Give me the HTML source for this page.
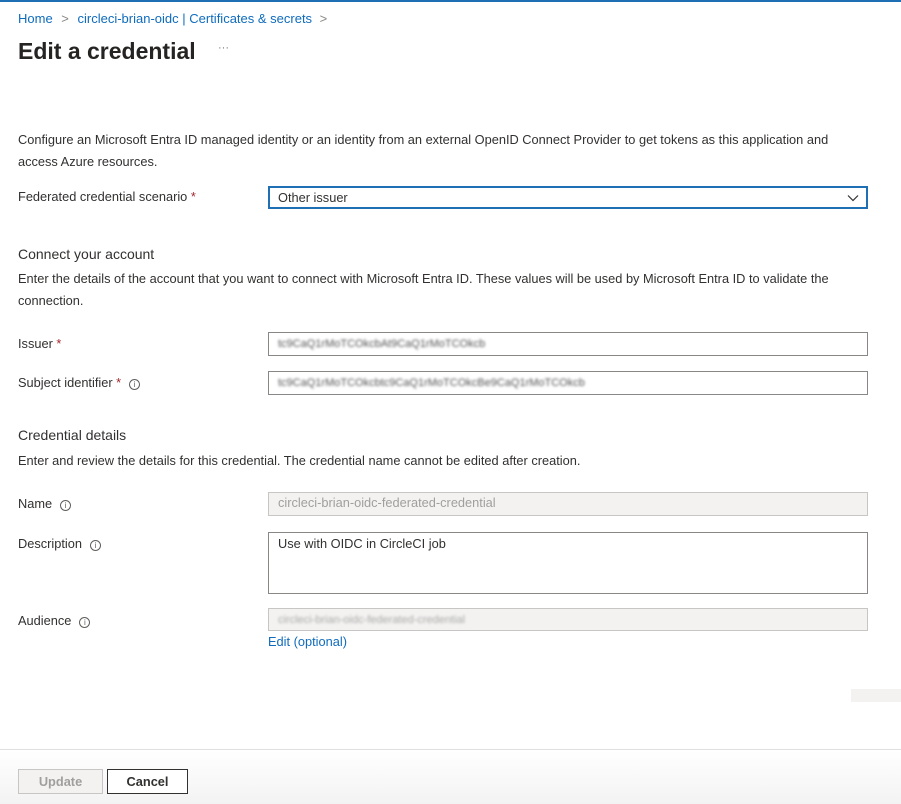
<!DOCTYPE html>
<html><head><meta charset="utf-8"><style>
*{box-sizing:border-box;margin:0;padding:0}
body{width:901px;height:804px;background:#fff;font-family:"Liberation Sans",Arial,sans-serif;font-size:12.8px;color:#323130;position:relative;overflow:hidden}
.a{position:absolute;white-space:nowrap}
.link{color:#0f6cbd}
.inp{position:absolute;left:268px;width:600px;border:1px solid #8a8886;background:#fff;padding-left:9px;line-height:20px}
.dis{background:#f3f2f1;border-color:#c8c6c4;color:#a19f9d}
.req{color:#a4262c}
.i{display:inline-block;width:11px;height:11px;border:1px solid #605e5c;border-radius:50%;font-size:8px;line-height:9px;text-align:center;margin-left:8px;vertical-align:0px;color:#605e5c}
.blur{filter:blur(1.3px);color:#555;font-size:11px}
</style></head><body>
<div class="a" style="left:0;top:0;width:901px;height:2px;background:#1f6fb5"></div>
<div class="a link" style="left:18px;top:11px;font-size:13px">Home <span style="color:#8a8886;margin:0 5px">&gt;</span> circleci-brian-oidc | Certificates &amp; secrets <span style="color:#8a8886;margin-left:4px">&gt;</span></div>
<div class="a" style="left:18px;top:38px;font-size:23px;font-weight:bold;color:#252423">Edit a credential</div>
<div class="a" style="left:218px;top:42px;font-size:11px;color:#777">···</div>
<div class="a" style="left:18px;top:129px;line-height:22px">Configure an Microsoft Entra ID managed identity or an identity from an external OpenID Connect Provider to get tokens as this application and<br>access Azure resources.</div>
<div class="a" style="left:18px;top:189px">Federated credential scenario <span class="req">*</span></div>
<div class="inp" style="top:186px;height:23px;border:2px solid #1f6fb5;padding-left:8px;line-height:19px">Other issuer
<svg style="position:absolute;right:7px;top:6px" width="12" height="8" viewBox="0 0 12 8"><path d="M1 1.5L6 6.5L11 1.5" fill="none" stroke="#323130" stroke-width="1.2"/></svg></div>
<div class="a" style="left:18px;top:246px;font-size:14px">Connect your account</div>
<div class="a" style="left:18px;top:268px;line-height:22px">Enter the details of the account that you want to connect with Microsoft Entra ID. These values will be used by Microsoft Entra ID to validate the<br>connection.</div>
<div class="a" style="left:18px;top:336px">Issuer <span class="req">*</span></div>
<div class="inp" style="top:332px;height:24px"><span class="blur">tc9CaQ1rMoTCOkcbAt9CaQ1rMoTCOkcb</span></div>
<div class="a" style="left:18px;top:375px">Subject identifier <span class="req">*</span><span class="i">i</span></div>
<div class="inp" style="top:371px;height:24px"><span class="blur">tc9CaQ1rMoTCOkcbtc9CaQ1rMoTCOkcBe9CaQ1rMoTCOkcb</span></div>
<div class="a" style="left:18px;top:427px;font-size:14px">Credential details</div>
<div class="a" style="left:18px;top:453px">Enter and review the details for this credential. The credential name cannot be edited after creation.</div>
<div class="a" style="left:18px;top:496px">Name<span class="i">i</span></div>
<div class="inp dis" style="top:492px;height:24px">circleci-brian-oidc-federated-credential</div>
<div class="a" style="left:18px;top:536px">Description<span class="i">i</span></div>
<div class="inp" style="top:532px;height:62px;padding-top:1px">Use with OIDC in CircleCI job</div>
<div class="a" style="left:18px;top:613px">Audience<span class="i">i</span></div>
<div class="inp dis" style="top:608px;height:23px"><span class="blur" style="color:#aaa">circleci-brian-oidc-federated-credential</span></div>
<div class="a link" style="left:268px;top:634px">Edit (optional)</div>
<div class="a" style="left:851px;top:689px;width:50px;height:13px;background:#f3f2f1"></div>
<div class="a" style="left:0;top:749px;width:901px;height:1px;background:#e1dfdd"></div>
<div class="a" style="left:0;top:750px;width:901px;height:54px;background:linear-gradient(#fff,#f3f3f3)"></div>
<div class="a" style="left:18px;top:769px;width:85px;height:25px;border:1px solid #c8c6c4;background:#f3f2f1;color:#a19f9d;text-align:center;line-height:23px;font-weight:bold">Update</div>
<div class="a" style="left:107px;top:769px;width:81px;height:25px;border:1px solid #323130;background:#fff;text-align:center;line-height:23px;font-weight:bold">Cancel</div>
</body></html>
